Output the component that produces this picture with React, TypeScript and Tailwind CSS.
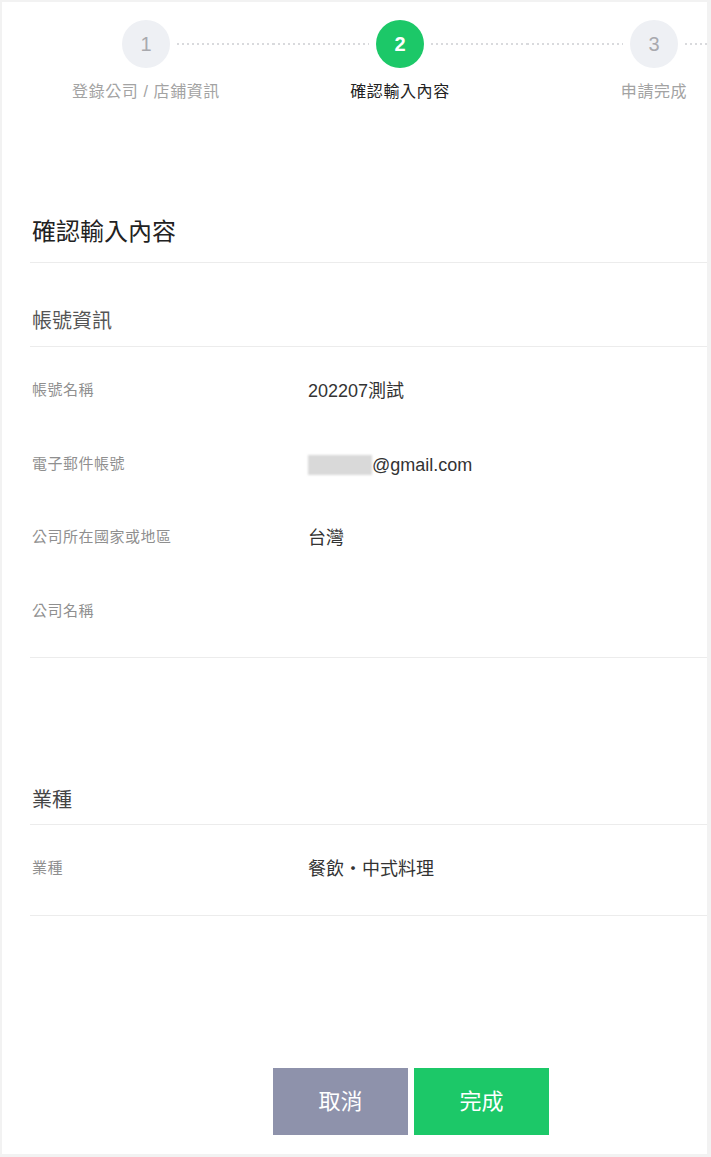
import React from 'react';

type Step = {
  no: number;
  label: string;
};

const steps: Step[] = [
  { no: 1, label: '登錄公司 / 店鋪資訊' },
  { no: 2, label: '確認輸入內容' },
  { no: 3, label: '申請完成' }
];

const current = 2;

function Dots({ hidden }: { hidden?: boolean }) {
  return (
    <div
      className={
        hidden
          ? 'h-[2px] flex-1'
          : 'h-[2px] flex-1 bg-[linear-gradient(to_right,#d9dadd_2px,transparent_2px)] bg-[length:5px_2px] bg-repeat-x'
      }
    />
  );
}

function Stepper() {
  return (
    <div className="flex overflow-hidden pl-[17px] pt-[18px]">
      {steps.map((step, i) => {
        const active = step.no === current;
        return (
          <div key={step.no} className="flex w-[254px] shrink-0 flex-col items-center">
            <div className="flex w-full items-center gap-[7px]">
              <Dots hidden={i === 0} />
              <div
                className={
                  active
                    ? 'flex h-[48px] w-[48px] items-center justify-center rounded-full bg-[#1cc868] text-[20px] font-bold text-white'
                    : 'flex h-[48px] w-[48px] items-center justify-center rounded-full bg-[#eef0f4] text-[20px] text-[#a8a9ae]'
                }
              >
                {step.no}
              </div>
              <Dots />
            </div>
            <div
              className={
                active
                  ? 'mt-[14px] text-[16px] leading-[20px] tracking-[0.6px] text-[#222]'
                  : 'mt-[14px] text-[16px] leading-[20px] tracking-[0.6px] text-[#a3a3a3]'
              }
            >
              {step.label}
            </div>
          </div>
        );
      })}
    </div>
  );
}

function Row({ label, children }: { label: string; children?: React.ReactNode }) {
  return (
    <div className="flex h-[20px] items-start">
      <div className="w-[276px] shrink-0 text-[15px] leading-[20px] tracking-[0.5px] text-[#8f8f8f]">
        {label}
      </div>
      <div className="-mt-[1px] text-[18px] leading-[24px] text-[#333]">{children}</div>
    </div>
  );
}

export default function App() {
  return (
    <div
      className="h-[1157px] w-[711px] border-b-[3px] border-l-2 border-r-4 border-t-2 border-[#f2f2f2] bg-white"
      style={{ fontFamily: '"Liberation Sans", "Noto Sans CJK TC", sans-serif' }}
    >
      <Stepper />

      <div className="pl-[28px] pt-[114px]">
        <div className="border-b border-[#ececec] pb-[14px] pl-[2px] text-[24px] leading-[32px] text-[#222]">
          確認輸入內容
        </div>

        <div className="border-b border-[#ececec] pb-[12px] pl-[2px] pt-[45px] text-[20px] leading-[26px] text-[#555]">
          帳號資訊
        </div>
        <div className="flex flex-col gap-[53.5px] border-b border-[#ececec] pb-[36px] pl-[2px] pt-[33px]">
          <Row label="帳號名稱">202207測試</Row>
          <Row label="電子郵件帳號">
            <span className="flex items-center">
              <span className="inline-block h-[20px] w-[64px] bg-[#d9d9d9] blur-[1px]" />
              @gmail.com
            </span>
          </Row>
          <Row label="公司所在國家或地區">台灣</Row>
          <Row label="公司名稱" />
        </div>

        <div className="border-b border-[#ececec] pb-[11px] pl-[2px] pt-[129px] text-[20px] leading-[26px] text-[#444]">
          業種
        </div>
        <div className="flex flex-col border-b border-[#ececec] pb-[37px] pl-[2px] pt-[33px]">
          <Row label="業種">餐飲・中式料理</Row>
        </div>
      </div>

      <div className="mt-[152px] flex gap-[6px] pl-[271px]">
        <button className="flex h-[67px] w-[135px] items-center justify-center bg-[#8e92ab] text-[22px] text-white">
          取消
        </button>
        <button className="flex h-[67px] w-[135px] items-center justify-center bg-[#1cc868] text-[22px] text-white">
          完成
        </button>
      </div>
    </div>
  );
}
